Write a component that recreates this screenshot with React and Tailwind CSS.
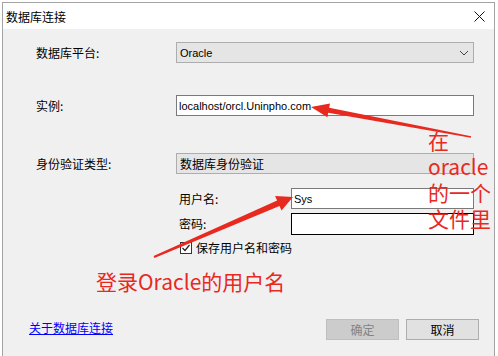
import React from 'react'

const cjk = "[font-family:'Noto_Sans_CJK_SC',sans-serif]"
const latin = "[font-family:'Liberation_Sans','Noto_Sans_CJK_SC',sans-serif]"

function Chevron() {
    return (
        <svg width="10" height="6" viewBox="0 0 10 6" className="mr-[4px]">
            <path d="M1 1 L5 5 L9 1" fill="none" stroke="#444" strokeWidth="1" />
        </svg>
    )
}

function Arrows() {
    return (
        <svg className="absolute left-0 top-0 pointer-events-none" width="498" height="356">
            <polygon
                fill="#e8291f"
                points="311,107 330,103.4 329.2,107.8 471.1,136.3 470.9,137.7 328.2,112.8 327.4,117.2"
            />
            <polygon
                fill="#e8291f"
                points="293,197 275.1,196 277.1,200.5 153.6,256.1 154.4,257.9 279.5,206.1 281.5,210.6"
            />
        </svg>
    )
}

export default function App() {
    return (
        <div className={`relative w-[498px] h-[356px] bg-white overflow-hidden ${cjk}`}>
            <div className="ml-[2px] mt-[2px] w-[493px] h-[360px] border-x border-t border-[#a3a3a3] flex flex-col">
                {/* title bar */}
                <div className="h-[26px] bg-white flex items-center justify-between pl-[3px] pr-[9px]">
                    <span className="text-[12px] leading-[16px] text-black mt-[1px]">数据库连接</span>
                    <svg width="11" height="11" viewBox="0 0 11 11">
                        <path d="M0.5 0.5 L10.5 10.5 M10.5 0.5 L0.5 10.5" stroke="#111" strokeWidth="1" />
                    </svg>
                </div>

                <div className="flex-1 bg-[#f0f0f0] flex flex-col text-[12px] text-black">
                    <div className="mt-[13px] ml-[33px] flex items-center h-[21px]">
                        <span className="w-[140px] leading-[16px]">数据库平台:</span>
                        <div className="w-[298px] h-[21px] bg-[#e5e5e5] border border-[#adadad] flex items-center justify-between pl-[3px]">
                            <span className={`${latin} text-[11px] leading-[14px]`}>Oracle</span>
                            <Chevron />
                        </div>
                    </div>

                    <div className="mt-[32px] ml-[33px] flex items-center h-[21px]">
                        <span className="w-[140px] leading-[16px]">实例:</span>
                        <div className="w-[298px] h-[21px] bg-white border border-[#7a7a7a] flex items-center pl-[2px]">
                            <span className={`${latin} text-[11px] leading-[14px]`}>localhost/orcl.Uninpho.com</span>
                        </div>
                    </div>

                    <div className="mt-[37px] ml-[33px] flex items-center h-[21px]">
                        <span className="w-[140px] leading-[16px]">身份验证类型:</span>
                        <div className="w-[298px] h-[21px] bg-[#e5e5e5] border border-[#adadad] flex items-center pl-[3px]">
                            <span className="leading-[16px]">数据库身份验证</span>
                        </div>
                    </div>

                    <div className="mt-[14px] ml-[176px] flex items-center h-[21px]">
                        <span className="w-[112px] leading-[16px]">用户名:</span>
                        <div className="w-[183px] h-[21px] bg-white border border-[#7a7a7a] flex items-center pl-[2px]">
                            <span className={`${latin} text-[11px] leading-[14px]`}>Sys</span>
                        </div>
                    </div>

                    <div className="mt-[4px] ml-[176px] flex items-center h-[22px]">
                        <span className="w-[112px] leading-[16px]">密码:</span>
                        <div className="w-[183px] h-[22px] bg-white border border-black" />
                    </div>

                    <div className="mt-[7px] ml-[177px] flex items-center h-[12px]">
                        <div className="w-[12px] h-[12px] border border-[#333] bg-white flex items-center justify-center">
                            <svg width="10" height="10" viewBox="0 0 10 10">
                                <path d="M1.5 5 L4 7.5 L8.5 2" fill="none" stroke="#222" strokeWidth="1.2" />
                            </svg>
                        </div>
                        <span className="ml-[4px] leading-[16px]">保存用户名和密码</span>
                    </div>

                    <div className="mt-[65px] pl-[26px] pr-[15px] flex items-start justify-between">
                        <a className="leading-[17px] text-[#0000ff] underline cursor-pointer">关于数据库连接</a>
                        <div className="flex gap-[7px]">
                            <button className="w-[73px] h-[21px] bg-[#cccccc] border border-[#bfbfbf] text-[#838383] leading-[16px]">
                                确定
                            </button>
                            <button className="w-[73px] h-[21px] bg-[#e1e1e1] border border-[#adadad] text-black leading-[16px]">
                                取消
                            </button>
                        </div>
                    </div>
                </div>
            </div>

            <Arrows />

            <div className="absolute left-[428px] top-[127px] flex flex-col text-[21px] leading-[26px] text-[#e8291f]">
                <span className="h-[26px]">在</span>
                <span className="h-[26px]">oracle</span>
                <span className="h-[26px]">的一个</span>
                <span className="h-[26px]">文件里</span>
            </div>
            <div className="absolute left-[96px] top-[268px] text-[21px] leading-[26px] text-[#e8291f]">
                登录Oracle的用户名
            </div>
        </div>
    )
}
